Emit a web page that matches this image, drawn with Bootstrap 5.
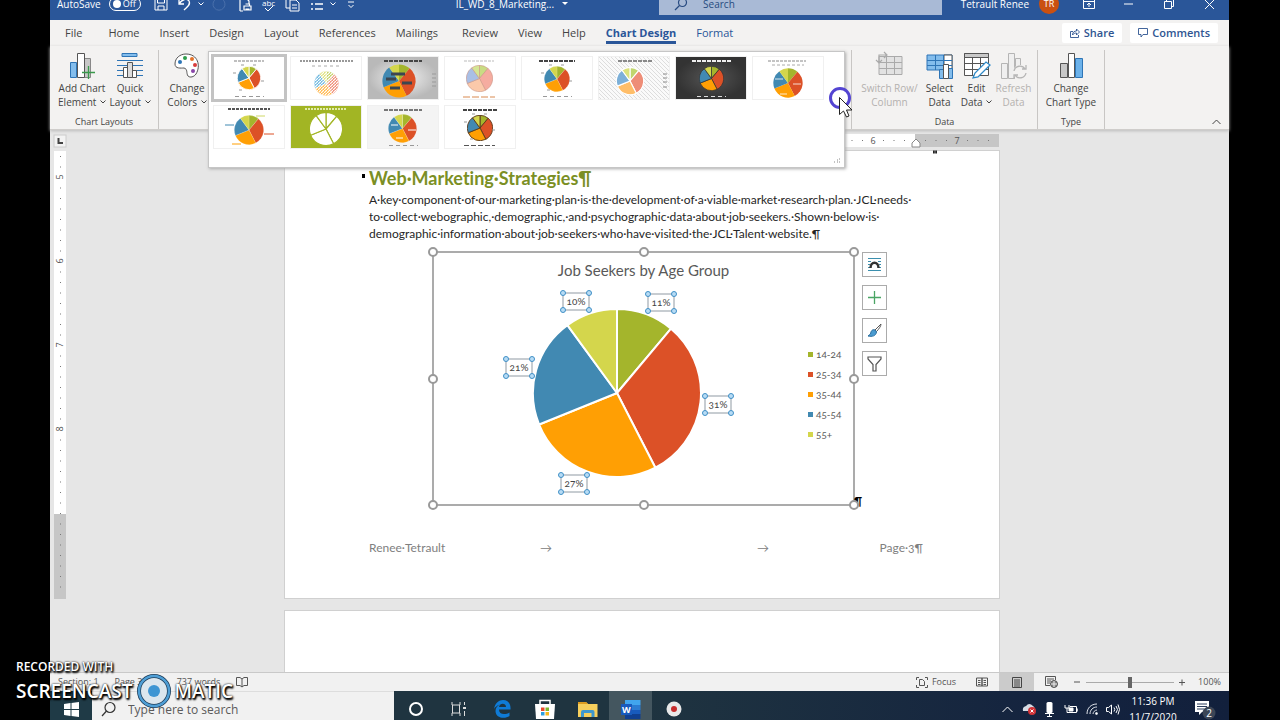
<!DOCTYPE html>
<html lang="en">
<head>
<meta charset="utf-8">
<meta name="viewport" content="width=device-width, initial-scale=1">
<title>IL_WD_8_Marketing - Word</title>
<link href="https://cdn.jsdelivr.net/npm/bootstrap@5.3.0/dist/css/bootstrap.min.css" rel="stylesheet">
<style>
:root{--word:#2a5699;--ink:#444;--line:#c8c6c4}
body{background:#000;font-family:"Open Sans","Noto Sans",sans-serif;font-size:11px;line-height:14px;color:var(--ink)}
svg{display:block;flex:none;overflow:visible}
button{background:none;border:0;padding:0;color:inherit;font:inherit}
.screen{height:100vh;padding:0 51px 0 50px}
.desk{background:#e6e6e6}
/* title bar */
.titlebar{height:20px;background:var(--word);color:#fff;font-size:10px}
.titlebar-in{height:32px;margin-top:-12px;padding-left:7px}
.tb{width:24px;height:24px;display:flex;align-items:center;justify-content:center}
.tb.slim{width:8px}.tb.wide{width:28px}.tb.win{width:40px}
.toggle{width:32px;height:14px;border:1px solid #fff;border-radius:7px;padding:0 4px 0 3px;font-size:9px;line-height:12px}
.knob{width:8px;height:8px;border-radius:50%;background:#fff}
.searchbox{width:283px;height:22px;background:#a9bad6;color:#274a80;padding-left:16px}
.searchbox input,.tasksearch input{background:none;border:0;outline:0;padding:0;min-width:0;flex:1}
.searchbox input::placeholder{color:#274a80;opacity:1}
.avatar{width:20px;height:20px;border-radius:50%;background:#ca5010;font-size:9px;line-height:20px;margin:0 10px}
/* tabs */
.tabs{height:26px;background:#f3f2f1;padding:0 11px 0 5px}
.tabs a{color:var(--ink);text-decoration:none;padding:5px 10px;line-height:16px}
.tabs a.file{margin-right:6px}
.tabs a.ctx{color:var(--word)}
.tabs a.on{font-weight:700}
.tabs a.on span{display:block;box-shadow:0 3px 0 var(--word)}
.pill{background:#fff;border-radius:2px;height:20px;color:#2f5591;font-weight:600}
/* ribbon */
.ribbon{height:84px;background:#f3f2f1;font-size:10px;border-bottom:1px solid #cfcdcb;box-shadow:0 1px 3px #bbb;position:relative;z-index:3}
.rgroup{border-right:1px solid var(--line);margin-top:4px;position:relative}
.rbtn{padding-top:2px;line-height:14px;text-align:center}
.rbtn svg{margin:0 auto 1px}
.rbtn .cv{display:inline-block;margin:0 0 2px 1px}
.rbtn:disabled{color:#b3b1af}
.rlabel{font-size:9px;line-height:14px;text-align:center}
.gallery{position:absolute;left:49px;right:6px;top:1px;height:117px;background:#fff;border:1px solid #c6c6c6;box-shadow:1px 1px 3px #aaa;padding:5px 4px 4px 5px;display:grid;grid-template-columns:repeat(auto-fill,70px);grid-auto-rows:42px;gap:7px}
.thumb{width:70px;height:42px;outline:1px solid #f0f0f0}
.thumb.on{outline:3px solid #c3c3c3}
/* workspace */
.vruler{width:21px;padding-left:4px}
.pagecol{width:714px}
.hruler{height:13px;margin-top:4px;margin-bottom:4px}
.page{background:#fff;outline:1px solid #d0d0d0}
.page1{padding:16px 76px 41px 84px;height:447px;flex:none}
.page1,.chart,.labels{font-family:Lato,"Open Sans",sans-serif;font-variant-ligatures:none}
.page1 h1{font-size:18px;line-height:22px;font-weight:700;color:#7b8f24;margin:0 0 2px}
.page1 h1::before{content:"";position:absolute;width:3px;height:4px;background:#000;margin:7px 0 0 -7px}
.page1 p{font-size:12px;line-height:17px;color:#262626;margin:0;white-space:nowrap}
.chart{width:421px;height:253px;outline:2px solid #ababab;outline-offset:-1px;position:relative;color:#595959;font-variant-numeric:oldstyle-nums}
.chart h2{font-size:15px;line-height:22px;font-weight:400;margin:0;padding:7px 0 8px;text-align:center}
.grip{position:absolute;width:10px;height:10px;border:2px solid #999;border-radius:50%;background:#fff;transform:translate(-50%,-50%)}
.legend{font-size:10px;line-height:20px;margin:55px 0 0 65px;padding:0;list-style:none}
.legend i{width:5px;height:5px;margin-right:3px}
.sidebtn{width:25px;height:25px;border:1px solid #ababab;background:#fff;display:flex;align-items:center;justify-content:center}
.footline{font-size:12px;line-height:16px;color:#808080;font-variant-numeric:oldstyle-nums;grid-template-columns:171px 217px 1fr}
/* status bar */
.status{height:19px;background:#f1f1f1;border-top:1px solid #c9c9c9;font-size:9px;color:#555}
.status .view{width:35px;height:18px;display:flex;align-items:center;justify-content:center}
.status .view.on{background:#cbcbcb}
.zoomer{-webkit-appearance:none;appearance:none;width:88px;height:12px;background:linear-gradient(#aaa,#aaa) center/100% 1px no-repeat;margin:0 4px 0 5px}
.zoomer::-webkit-slider-thumb{-webkit-appearance:none;width:4px;height:11px;background:#666}
.zoomer::-moz-range-thumb{width:4px;height:11px;background:#666;border:0;border-radius:0}
/* taskbar */
.taskbar{height:29px;background:linear-gradient(90deg,#1f3440 0 50%,#14233f 85%,#12203c);color:#fff}
.task{height:36px;width:43px;display:flex;align-items:center;justify-content:center}
.task.start{width:42px;background:#1f3a46}
.task.on{background:#44565f}
.tasksearch{width:302px;height:36px;background:#f1f1f1;border-top:1px solid #ddd;padding-left:9px;color:#555;font-size:12px}
.tasksearch input::placeholder{color:#5a5a5a;opacity:1}
.tray{width:21px;height:36px;display:flex;align-items:center;justify-content:center}
.clock{font-size:10px;line-height:16px;padding-top:2px;width:60px;height:36px;text-align:center}
/* recorder mark */
.mark-rec{position:absolute;left:16px;bottom:12px;color:#fff;font-weight:700;text-shadow:1px 1px 2px #000,0 0 2px #000,1px 2px 2px #000;z-index:5;pointer-events:none}
.mark-rec .sm-line{font-size:12px;line-height:14px;font-weight:600}
.mark-rec .lg-line{font-size:19px;line-height:32px;font-weight:600}
.pointer{position:absolute;right:-7px;top:34px}
</style>
</head>
<body>

<!-- shared drawings -->
<svg width="0" height="0" class="position-absolute" aria-hidden="true">
  <defs>
    <symbol id="pie" viewBox="-86 -86 172 172">
      <g stroke="var(--ps,#fff)" stroke-width="var(--pw,2)" stroke-linejoin="round">
        <path fill="var(--a,#a4b52c)" d="M0 0V-84A84 84 0 0 1 54-64.3Z"/>
        <path fill="var(--b,#dc5127)" d="M0 0L54-64.3A84 84 0 0 1 38.4 74.7Z"/>
        <path fill="var(--c,#ff9f04)" d="M0 0L38.4 74.7A84 84 0 0 1-77.9 31.5Z"/>
        <path fill="var(--d,#4189b2)" d="M0 0L-77.9 31.5A84 84 0 0 1-49.6-67.8Z"/>
        <path fill="var(--e,#d4d64c)" d="M0 0L-49.6-67.8A84 84 0 0 1 0-84Z"/>
      </g>
    </symbol>
    <symbol id="cv" viewBox="0 0 6 4"><path d="M.5.5 3 3 5.5.5" fill="none" stroke="currentColor"/></symbol>
    <pattern id="hatch" width="4" height="4" patternUnits="userSpaceOnUse"><rect width="4" height="4" fill="#fafafa"/><path d="M0 0 4 4" stroke="#d5d5d5" stroke-width=".8"/></pattern>
    <pattern id="pr" width="3" height="3" patternUnits="userSpaceOnUse"><path d="M0 3 3 0" stroke="#fff" stroke-width="1.2"/></pattern>
    <radialGradient id="grey"><stop stop-color="#f2f2f2"/><stop offset="1" stop-color="#b9b9b9"/></radialGradient>
    <radialGradient id="dark"><stop stop-color="#555"/><stop offset="1" stop-color="#333"/></radialGradient>
    <g id="dots" fill="none" stroke="#999" stroke-width="1"><path d="M19 16h3M47 24h3M25 33h3M27 8h3M39 8h3"/></g>
    <path id="leg" d="M21 39.5H50" fill="none" stroke="#999" stroke-dasharray="4 3"/>
  </defs>
</svg>

<div class="screen d-flex flex-column overflow-hidden position-relative">

  <!-- title bar -->
  <header class="titlebar overflow-hidden flex-shrink-0">
    <div class="titlebar-in d-flex align-items-center">
      <span>AutoSave</span>
      <button class="toggle d-flex align-items-center justify-content-between ms-2 me-2" aria-label="AutoSave off"><span class="knob"></span>Off</button>
      <button class="tb" aria-label="Save"><svg width="14" height="14" fill="none" stroke="#fff"><path d="M1 1h12v12H1ZM3.5 1v5h7V1M4 13V9h6v4"/></svg></button>
      <button class="tb" aria-label="Undo"><svg width="13" height="14" fill="none" stroke="#fff" stroke-width="1.3"><path d="M1 2v5h5M1 7C4 2 9 1 11 4c2 4-2 6-5 9"/></svg></button>
      <button class="tb slim" aria-label="Undo list"><svg width="6" height="4"><use href="#cv"/></svg></button>
      <button class="tb wide" aria-label="Redo" disabled><svg width="14" height="14" fill="none" stroke="#4a70ab"><path d="M10 2a6 6 0 1 1-6 0"/></svg></button>
      <button class="tb" aria-label="Print preview"><svg width="14" height="15" fill="none" stroke="#fff" stroke-width="1.2"><path d="M2 14V1h6l3 3v3M2 14h3"/><path d="M6 9h7v4H6ZM7.500 7h4v2M7.500 12h4"/></svg></button>
      <button class="tb" aria-label="Spelling"><svg width="14" height="14"><text x="0" y="9" font-size="8" fill="#fff">abc</text><path d="m3 11 3 3 5-5" fill="none" stroke="#fff"/></svg></button>
      <button class="tb" aria-label="Copy"><svg width="15" height="14" fill="none" stroke="#fff"><path d="M5 11H1V1h6v2M5 3h6l3 3v8H5ZM7 8h5M7 11h5"/></svg></button>
      <button class="tb" aria-label="Bullets"><svg width="14" height="14" stroke="#fff" stroke-width="1.5"><path d="M1 2h2M5 2h8M1 7h2M5 7h8M1 12h2M5 12h8"/></svg></button>
      <button class="tb slim" aria-label="Bullet list"><svg width="6" height="4"><use href="#cv"/></svg></button>
      <button class="tb wide" aria-label="Customize toolbar"><svg width="8" height="8" fill="none" stroke="#fff"><path d="M1 2h6M1.500 5 4 7.500 6.500 5"/></svg></button>
      <div class="flex-grow-1 d-flex align-items-center justify-content-center">IL_WD_8_Marketing...<svg class="ms-2" width="6" height="4"><path d="M0 0h6L3 3Z" fill="#fff"/></svg></div>
      <label class="searchbox d-flex align-items-center">
        <svg width="12" height="12" class="me-3" fill="none" stroke="currentColor" stroke-width="1.200"><circle cx="7.500" cy="4.500" r="4"/><path d="M4.500 7.500 0 12"/></svg>
        <input type="search" placeholder="Search" aria-label="Search">
      </label>
      <span class="ms-auto ps-3">&nbsp;Tetrault Renee</span>
      <span class="avatar text-center">TR</span>
      <button class="tb win" aria-label="Ribbon options"><svg width="12" height="10" fill="none" stroke="#fff"><path d="M.5.5h11v9H.5ZM.5 2.500h11M6 8V4.500M4 6l2-2 2 2"/></svg></button>
      <button class="tb win" aria-label="Minimize"><svg width="10" height="2"><path d="M0 1h9" stroke="#fff"/></svg></button>
      <button class="tb win" aria-label="Restore"><svg width="10" height="10" fill="none" stroke="#fff"><path d="M.5 2.500h7v7h-7ZM2.500 2.500v-2h7v7h-2"/></svg></button>
      <button class="tb win" aria-label="Close"><svg width="9" height="9" stroke="#fff"><path d="m0 0 9 9M9 0 0 9"/></svg></button>
    </div>
  </header>

  <!-- ribbon tabs -->
  <nav class="tabs d-flex align-items-center flex-shrink-0" aria-label="Ribbon tabs">
    <a class="file" href="#">File</a><a href="#">Home</a><a href="#">Insert</a><a href="#">Design</a><a href="#">Layout</a><a href="#">References</a><a class="me-1" href="#">Mailings</a><a href="#">Review</a><a href="#">View</a><a href="#">Help</a><a class="ctx on" href="#" aria-current="page"><span>Chart Design</span></a><a class="ctx" href="#">Format</a>
    <button class="pill ms-auto d-flex align-items-center px-2"><svg class="me-1" width="10" height="10" fill="none" stroke="currentColor" stroke-width=".9"><path d="M3 3.500H.5v6h8V7M2.500 7c0-3 2-4 4-4V1l3 3-3 3V5c-2 0-3 .5-4 2Z"/></svg>Share</button>
    <button class="pill ms-2 d-flex align-items-center px-2"><svg class="me-1" width="10" height="10" fill="none" stroke="currentColor" stroke-width=".9"><path d="M.5.5h9v6H5L3 9V6.500H.5Z"/></svg>Comments</button>
  </nav>

  <!-- ribbon -->
  <section class="ribbon d-flex flex-shrink-0" aria-label="Chart Design">
    <div class="rgroup d-flex flex-column" style="width:109px">
      <div class="d-flex justify-content-center align-items-start flex-grow-1">
        <button class="rbtn" style="width:52px"><svg width="28" height="28" fill="none" stroke="#555"><path d="M2.500 10.500h6v15h-6Z" fill="#83bdec" stroke="#2e75b6"/><path d="M16.500 6.500h6v19h-6Z" fill="#c8c8c8" stroke="#888"/><path d="M9.500 1.500h7v24h-7Z" fill="#fff"/><path d="M20.500 14v13M14 20.500h13" stroke="#3a9a4c" stroke-width="1.300"/></svg>Add Chart<br>Element <svg class="cv" width="6" height="4"><use href="#cv"/></svg></button>
        <button class="rbtn" style="width:44px"><svg width="28" height="28" fill="none" stroke="#555"><path d="M6 1.500h15v3H6Z" fill="#83bdec" stroke="#2e75b6"/><path d="M1 8.500h26M1 13.500h26M1 18.500h26M1 23.500h26" stroke="#2e75b6"/><path d="M7.500 15.500h4v10h-4ZM16.500 18.500h4v7h-4Z" fill="#fff"/><path d="M11.500 10.500h5v15h-5Z" fill="#ddd"/></svg>Quick<br>Layout <svg class="cv" width="6" height="4"><use href="#cv"/></svg></button>
      </div>
      <div class="rlabel">Chart Layouts</div>
    </div>
    <div class="rgroup flex-grow-1">
      <button class="rbtn ms-1" style="width:48px"><svg width="28" height="28"><path d="M13 2C7 2 2 6 2 12c0 5 6 4 9 4 4 1 2 5 4 8 2 2 6 1 8-2 5-8 2-20-10-20Z" fill="#fff" stroke="#555"/><circle cx="7" cy="10" r="2" fill="#2e75b6"/><circle cx="12" cy="6" r="2" fill="#2f9e4c"/><circle cx="19" cy="7" r="2" fill="#e3732a"/><circle cx="22" cy="13" r="2" fill="#d93c3c"/><circle cx="20" cy="19" r="2" fill="#8a45a8"/></svg>Change<br>Colors <svg class="cv" width="6" height="4"><use href="#cv"/></svg></button>

      <!-- open style gallery -->
      <div class="gallery" role="listbox" aria-label="Chart styles">
        <button class="thumb on" aria-label="Style 1"><svg width="70" height="42"><path d="M20 4h30" stroke="#aaa" stroke-width="1.500" stroke-dasharray="3 1"/><use href="#pie" x="23" y="9" width="24" height="24" style="--pw:6"/><use href="#dots"/><use href="#leg"/></svg></button>
        <button class="thumb" aria-label="Style 2"><svg width="70" height="42"><path d="M9 4h53" stroke="#999" stroke-width="2" stroke-dasharray="2 1"/><path d="M21 9h30" stroke="#aaa" stroke-dasharray="3 3"/><use href="#pie" x="23" y="14" width="25" height="25" style="--a:#c4d368;--b:#ef8e78;--c:#ffb950;--d:#70b9e0;--e:#dfe27c"/><circle cx="35.500" cy="26.500" r="12" fill="url(#pr)"/></svg></button>
        <button class="thumb" aria-label="Style 3"><svg width="70" height="42"><rect width="70" height="42" fill="url(#grey)"/><path d="M16 4h38" stroke="#444" stroke-width="2" stroke-dasharray="4 1"/><use href="#pie" x="14" y="7" width="34" height="34" style="--pw:0"/><path d="M23 17h14M18 22h10M34 26h10M22 31h10" stroke="#3c4650" stroke-width="3"/><path d="M64 17h4M64 21h4M64 25h4M64 29h4" stroke="#999"/></svg></button>
        <button class="thumb" aria-label="Style 4"><svg width="70" height="42"><path d="M19 4h30" stroke="#bbb" stroke-dasharray="3 1"/><use href="#pie" x="21" y="8" width="27" height="27" style="--a:#c9dc83;--b:#f5aca0;--c:#fbc9aa;--d:#a9bfe6;--e:#d5e694;--ps:#c98;--pw:4"/><path d="M18 40h32" stroke="#d98a50" stroke-dasharray="7 2"/></svg></button>
        <button class="thumb" aria-label="Style 5"><svg width="70" height="42"><path d="M17 4h36" stroke="#444" stroke-width="2" stroke-dasharray="4 1"/><use href="#pie" x="22" y="9" width="26" height="26" style="--pw:1"/><use href="#dots"/><use href="#leg"/></svg></button>
        <button class="thumb" aria-label="Style 6"><svg width="70" height="42"><rect width="70" height="42" fill="url(#hatch)"/><path d="M19 4h34" stroke="#888" stroke-width="2" stroke-dasharray="4 1"/><use href="#pie" x="17" y="10" width="28" height="28" style="--a:#c0d66e;--b:#ee8d77;--c:#ffbe69;--d:#7db0d8;--e:#dbe27c;--pw:7"/><path d="M64 17h4M64 21h4M64 25h4M64 30h4" stroke="#888"/></svg></button>
        <button class="thumb" aria-label="Style 7"><svg width="70" height="42"><rect width="70" height="42" fill="url(#dark)"/><path d="M16 4h39" stroke="#eee" stroke-width="2" stroke-dasharray="4 1"/><use href="#pie" x="23" y="9" width="25" height="25" style="--ps:#333;--pw:5"/><path d="M21 39.500H50" stroke="#ddd" stroke-dasharray="4 3"/></svg></button>
        <button class="thumb" aria-label="Style 8"><svg width="70" height="42"><path d="M15 4h38" stroke="#888" stroke-width="1" stroke-dasharray="3 1"/><path d="M19 8h32" stroke="#aaa" stroke-dasharray="3 2"/><use href="#pie" x="20" y="11" width="30" height="30" style="--pw:0"/><path d="M22 22h8M40 27h8M27 37h7" stroke="#fff" opacity=".8"/></svg></button>
        <button class="thumb" aria-label="Style 9"><svg width="70" height="42"><path d="M14 3h42" stroke="#555" stroke-width="2" stroke-dasharray="3 1"/><use href="#pie" x="20" y="9" width="30" height="30" style="--pw:1"/><path d="M11 19h9" stroke="#4189b2"/><path d="M50 28h10" stroke="#dc5127"/><path d="M18 38h9" stroke="#ff9f04"/><path d="M42 10h9" stroke="#cfd866"/></svg></button>
        <button class="thumb" aria-label="Style 10"><svg width="70" height="42"><rect width="70" height="42" fill="#a2b524"/><path d="M14 3h42" stroke="#e2ecab" stroke-width="2" stroke-dasharray="2 1"/><use href="#pie" x="18" y="6" width="34" height="34" style="--a:#fff;--b:#fff;--c:#fff;--d:#fff;--e:#fff;--ps:#a2b524;--pw:6"/></svg></button>
        <button class="thumb" aria-label="Style 11"><svg width="70" height="42"><rect width="70" height="42" fill="#f4f4f4"/><path d="M16 4h38" stroke="#777" stroke-width="2" stroke-dasharray="4 1"/><use href="#pie" x="20" y="8" width="29" height="29" style="--pw:1"/><path d="M23 19h7M40 24h8M28 32h7" stroke="#fff"/><use href="#leg"/></svg></button>
        <button class="thumb" aria-label="Style 12"><svg width="70" height="42"><path d="M18 4h34" stroke="#444" stroke-width="2" stroke-dasharray="4 1"/><use href="#pie" x="22" y="9" width="26" height="26" style="--ps:#5a3b1c;--pw:6"/><use href="#dots"/><path d="M19 39.500h31" stroke="#555" stroke-dasharray="5 2"/></svg></button>
        <svg class="position-absolute bottom-0 end-0 m-1" width="6" height="6"><path d="M0 5h1M3 5h1M5 5h1M3 3h1M5 2h1" stroke="#888"/></svg>
        <svg class="pointer" width="22" height="32"><circle cx="11" cy="12" r="9.500" fill="#fff" stroke="#5344d2" stroke-width="3"/><path d="M10.500 11.500v17l4-3.500 3 6 2.500-1-2.500-6h5.500Z" fill="#fff" stroke="#222"/></svg>
      </div>
    </div>
    <div class="rgroup d-flex flex-column" style="width:186px">
      <div class="d-flex justify-content-center align-items-start flex-grow-1 ps-1">
        <button class="rbtn" style="width:60px" disabled><svg width="28" height="28" fill="none" stroke="#aaa"><path d="M3 4.500h23v18H3Z" fill="#e2e2e2"/><path d="M3 10.500h23M3 16.500h23M10.500 4v18M18.500 4v18"/><path d="M3 11V3h8M8 0l3 3-3 3M0 8l3 3 3-3" stroke-width="1.200"/></svg>Switch Row/<br>Column</button>
        <button class="rbtn" style="width:40px"><svg width="28" height="28" fill="none" stroke="#2e75b6"><path d="M1 3h25v15H1Z" fill="#83bdec"/><path d="M18 3h8v15h-8Z" fill="#fff" stroke="#555"/><path d="M1 8.500h25M1 13.500h25M9.500 3v15M17.500 3v15"/><path d="M13.500 17.500h4v9h-4ZM22.500 16.500h4v10h-4Z" fill="#83bdec"/><path d="M17.500 12.500h5v14h-5Z" fill="#fff" stroke="#555"/></svg>Select<br>Data</button>
        <button class="rbtn" style="width:34px"><svg width="28" height="28" fill="none" stroke="#555"><path d="M1.500 1.500h24v22h-24Z" fill="#fff"/><path d="M1.500 1.500h24v4h-24Z" fill="#c9c9c9"/><path d="M1.500 11.500h24M1.500 17.500h24M9.500 6v17M17.500 6v17"/><path d="m10 26 2-5L23 10l4 3-12 12Z" fill="#fff" stroke="#2e8ac8" stroke-width="1.300"/></svg>Edit<br>Data <svg class="cv" width="6" height="4"><use href="#cv"/></svg></button>
        <button class="rbtn" style="width:40px" disabled><svg width="28" height="28" fill="#efefef" stroke="#b5b5b5"><path d="M1.500 11.500h6v15h-6ZM15.500 6.500h5v10h-5ZM8.500 1.500h6v25h-6Z"/><circle cx="20" cy="20" r="7" stroke="none" fill="#f3f2f1"/><path d="M14 19a6 6 0 0 1 11-2M26 21a6 6 0 0 1-11 2M26 13v4h-4M14 27v-4h4" fill="none" stroke-width="1.300"/></svg>Refresh<br>Data</button>
      </div>
      <div class="rlabel">Data</div>
    </div>
    <div class="rgroup d-flex flex-column" style="width:67px">
      <div class="d-flex justify-content-center align-items-start flex-grow-1">
        <button class="rbtn"><svg width="28" height="28" fill="none" stroke="#555"><path d="M3.500 11.500h7v14h-7Z" fill="#c8c8c8"/><path d="M18.500 6.500h7v19h-7Z" fill="#6cb2ea" stroke="#2e75b6"/><path d="M11.500 1.500h6v24h-6Z" fill="#fff"/></svg>Change<br>Chart Type</button>
      </div>
      <div class="rlabel">Type</div>
    </div>
    <div class="d-flex align-items-end justify-content-end" style="width:124px">
      <button class="px-2 pb-1" aria-label="Collapse the ribbon"><svg width="9" height="6" fill="none" stroke="#444"><path d="m.5 5 4-4 4 4"/></svg></button>
    </div>
  </section>

  <!-- document area -->
  <main class="desk d-flex flex-grow-1 overflow-hidden" style="min-height:0">
    <div class="vruler flex-shrink-0">
      <svg width="12" height="470" font-size="9" fill="#555" text-anchor="middle">
        <rect y="5" width="12" height="12" fill="#f3f3f3" stroke="#ccc"/><path d="M4.500 8v5H9" fill="none" stroke="#444" stroke-width="2"/>
        <rect y="21" width="12" height="363" fill="#fff"/><rect y="384" width="12" height="85" fill="#c6c6c6"/>
        <path d="M6.500 26V464" stroke="#777" stroke-dasharray="1 9.500"/>
        <g fill="#fff"><path d="M0 41h12v12H0ZM0 125h12v12H0ZM0 209h12v12H0ZM0 293h12v12H0Z"/></g>
        <text transform="translate(9 47) rotate(-90)">5</text><text transform="translate(9 131) rotate(-90)">6</text><text transform="translate(9 215) rotate(-90)">7</text><text transform="translate(9 299) rotate(-90)">8</text>
      </svg>
    </div>
    <div class="flex-grow-1 d-flex flex-column align-items-center pe-3">
      <div class="pagecol hruler flex-shrink-0">
        <svg width="714" height="13" font-size="9" fill="#555" text-anchor="middle">
          <rect width="714" height="13" fill="#c6c6c6"/><rect x="84" width="546" height="13" fill="#fff"/>
          <path d="M10 6.500H710" stroke="#777" stroke-dasharray="1 9.500"/>
          <rect x="582" y="1" width="12" height="11" fill="#fff"/><rect x="666" y="1" width="12" height="11" fill="#c6c6c6"/>
          <text x="588" y="10">6</text><text x="672" y="10">7</text>
          <path d="M627 13V9l4-4 4 4v4Z" fill="#fff" stroke="#888"/>
        </svg>
      </div>
      <article class="page page1 pagecol position-relative">
        <svg class="position-absolute top-0 end-0 me-5" width="19" height="3"><path d="M1 1h4" stroke="#222" stroke-width="3" stroke-dasharray="1.800 .4"/></svg>
        <h1>Web·Marketing·Strategies¶</h1>
        <p>A·key·component·of·our·marketing·plan·is·the·development·of·a·viable·market·research·plan.·JCL·needs·<br>to·collect·webographic,·demographic,·and·psychographic·data·about·job·seekers.·Shown·below·is·<br>demographic·information·about·job·seekers·who·have·visited·the·JCL·Talent·website.¶</p>

        <div class="d-flex" style="padding:10px 0 0 64px">
          <figure class="chart m-0 flex-shrink-0">
            <h2>Job Seekers by Age Group</h2>
            <div class="d-flex" style="padding-left:60px">
              <svg id="agePie" width="250" height="212" viewBox="493 289 250 212" class="labels" font-size="10" fill="#444" text-anchor="middle">
                <use href="#pie" x="531" y="307" width="172" height="172"/>
              </svg>
              <ul class="legend">
                <li class="d-flex align-items-center"><i style="background:#a4b52c"></i>14-24</li>
                <li class="d-flex align-items-center"><i style="background:#dc5127"></i>25-34</li>
                <li class="d-flex align-items-center"><i style="background:#ff9f04"></i>35-44</li>
                <li class="d-flex align-items-center"><i style="background:#4189b2"></i>45-54</li>
                <li class="d-flex align-items-center"><i style="background:#d4d64c"></i>55+</li>
              </ul>
            </div>
            <span class="grip top-0 start-0"></span><span class="grip top-0 start-50"></span><span class="grip top-0 start-100"></span>
            <span class="grip top-50 start-0"></span><span class="grip top-50 start-100"></span>
            <span class="position-absolute bottom-0 start-100 fw-bold text-black" style="line-height:8px">¶</span>
            <span class="grip top-100 start-0"></span><span class="grip top-100 start-50"></span><span class="grip top-100 start-100"></span>
          </figure>
          <div class="d-flex flex-column gap-2 ps-2 ms-px">
            <button class="sidebtn" aria-label="Layout options"><svg width="15" height="15" fill="none" stroke="#3b8fae"><path d="M1 1.500h13M1 13.500h13M1 4.500h3M11 4.500h3M1 7.500h2M12 7.500h2M1 10.500h2M12 10.500h2"/><path d="M3.500 11c0-7 8-7 8 0" stroke="#333" stroke-width="2.500"/></svg></button>
            <button class="sidebtn" aria-label="Chart elements"><svg width="15" height="15" stroke="#4aa564" stroke-width="1.300"><path d="M7.500 1v13M1 7.500h13"/></svg></button>
            <button class="sidebtn" aria-label="Chart styles"><svg width="15" height="15"><path d="M14 1 8 7l1.500 1.500C12 6 14 3 14 1Z" fill="#fff" stroke="#555"/><path d="M8 7c-3-1-4 1-4.500 4L1 13c4 1 8 0 8.500-4Z" fill="#4a9bd0" stroke="#2b6f9f"/></svg></button>
            <button class="sidebtn" aria-label="Chart filters"><svg width="15" height="16" fill="none" stroke="#555" stroke-width="1.200"><path d="M1 1h13v2L9 8.500V15H6V8.500L1 3Z"/></svg></button>
          </div>
        </div>

        <div class="footline d-grid pt-3" style="margin-top:19px">
          <span>Renee·Tetrault</span><span>→</span><span class="d-flex justify-content-between"><span>→</span><span>Page·3¶</span></span>
        </div>
      </article>
      <div class="page pagecol flex-grow-1" style="margin-top:13px"></div>
    </div>
  </main>

  <!-- status bar -->
  <footer class="status d-flex align-items-center flex-shrink-0 ps-2">
    <span class="me-3">Section: 1</span><span class="me-3">Page 3 of 6</span><span class="me-3">737 words</span>
    <svg width="12" height="11" fill="none" stroke="#555"><path d="M6 2 4 .5H.5v8H4L6 10l2-1.500h3.500v-8H8L6 2v8"/></svg>
    <button class="ms-auto me-2 d-flex align-items-center"><svg class="me-1" width="12" height="11" fill="none" stroke="#555"><path d="M.5 3V.5H3M9 .5h2.500V3M.5 8v2.500H3M9 10.500h2.500V8M3.500 2.500h3l2 2v4h-5Z"/></svg>Focus</button>
    <button class="view" aria-label="Read mode"><svg width="12" height="10" fill="none" stroke="#555"><path d="M6 1H.5v8H6ZM6 1h5.500v8H6ZM2 3.500h2.500M2 5.500h2.500M7.500 3.500H10M7.500 5.500H10M2 7.500h2.500M7.500 7.500H10"/></svg></button>
    <button class="view on" aria-label="Print layout"><svg width="10" height="11" fill="none" stroke="#444"><path d="M.5.5h9v10h-9ZM2 3h6M2 5h6M2 7h6M2 9h6"/></svg></button>
    <button class="view" aria-label="Web layout"><svg width="13" height="12" fill="none" stroke="#555"><path d="M5 9.500H.5v-9h10V4M2 3h7M2 5h4M2 7h3"/><circle cx="9" cy="8" r="3.500" fill="#888"/><path d="M6 8h6M9 5v6" stroke="#eee"/></svg></button>
    <svg class="ms-1" width="8" height="8"><path d="M1 4h6" stroke="#555"/></svg>
    <input class="zoomer" type="range" min="10" max="190" value="100" aria-label="Zoom">
    <svg width="8" height="8"><path d="M1 4.500h6M4 1.500v6" stroke="#555"/></svg>
    <span class="px-2 ms-1">100%</span>
  </footer>

  <!-- Windows taskbar -->
  <nav class="taskbar d-flex overflow-hidden flex-shrink-0" aria-label="Taskbar">
    <button class="task start" aria-label="Start"><svg width="15" height="15" fill="#fff"><path d="M0 2l6.500-1v6H0ZM7.500.9 15 0v7H7.500ZM0 8h6.500v6L0 13ZM7.500 8H15v7l-7.500-1Z"/></svg></button>
    <label class="tasksearch d-flex align-items-center"><svg class="me-2" width="15" height="15" fill="none" stroke="#333" stroke-width="1.200"><circle cx="9" cy="5.500" r="5"/><path d="M5.500 9 1 14"/></svg><input class="ms-1" type="search" placeholder="Type here to search" aria-label="Type here to search"></label>
    <button class="task" aria-label="Cortana"><svg width="14" height="14" fill="none" stroke="#fff" stroke-width="2"><circle cx="7" cy="7" r="6"/></svg></button>
    <button class="task" aria-label="Task view"><svg width="15" height="14" fill="none" stroke="#ddd"><path d="M1 0v3h8V0M1 14v-3h8v3M1.500 3v8M8.500 3v8M13.500 0v3M13.500 9v5"/><path d="M12 6h3" stroke-width="2"/></svg></button>
    <button class="task" aria-label="Edge"><svg width="18" height="18"><path d="M1 9C2 3 6 0 10 0c5 0 8 4 7.500 9.500H6c0 3 2 4.500 5 4.500 2 0 4-.5 5.500-1.500V16c-5 3.500-14 2-14-5 0-3 2-5.500 4.500-6.500C4 5.500 2 7 1 9Zm5-2h7c0-4-6-4.500-7 0Z" fill="#0f7bd6"/></svg></button>
    <button class="task" aria-label="Store"><svg width="20" height="20"><path d="M5 6V1.500h10V6" fill="none" stroke="#fff" stroke-width="1.500"/><path d="M0 5h20l-1 15H1Z" fill="#fff"/><path d="M6 8.500h3.500V12H6Z" fill="#e8482b"/><path d="M10.500 8.500H14V12h-3.500Z" fill="#7db72f"/><path d="M6 13h3.500v3.500H6Z" fill="#2d9fe0"/><path d="M10.500 13H14v3.500h-3.500Z" fill="#f7b71d"/></svg></button>
    <button class="task" aria-label="File Explorer"><svg width="20" height="17"><path d="M0 1h8l2 2h9.500v13H0Z" fill="#f7cf5c"/><path d="M0 1h8l2 2H0Z" fill="#dd9c1f"/><path d="M3 16v-5q0-2 2-2h9.500q2 0 2 2v5h-3v-4H6v4Z" fill="#3d97cf"/></svg></button>
    <button class="task on" aria-label="Word"><svg width="20" height="19"><path d="M4 0h15.500v5H4Z" fill="#41a5ee"/><path d="M4 5h15.500v5H4Z" fill="#2b7cd3"/><path d="M4 10h15.500v4H4Z" fill="#185abd"/><path d="M4 14h15.500v5H4Z" fill="#103f91"/><rect y="4" width="11" height="11" fill="#185abd"/><text x="1" y="13" font-size="9" font-weight="700" fill="#fff">W</text></svg></button>
    <button class="task" aria-label="Recorder"><svg width="16" height="16"><circle cx="8" cy="8" r="7.500" fill="#e8e8e8"/><circle cx="8" cy="8" r="3" fill="#c62b2b"/></svg></button>
    <div class="ms-auto d-flex">
      <button class="tray" aria-label="Hidden icons"><svg width="11" height="7" fill="none" stroke="#fff"><path d="m.5 6 5-5 5 5"/></svg></button>
      <span class="tray"><svg width="14" height="12"><path d="M1 8q-1-4 3-5 3-4 7 0 2 1 2 5Z" fill="#d7dce4"/><circle cx="10" cy="8" r="4" fill="#d13438"/><path d="m8.500 6.500 3 3m0-3-3 3" stroke="#fff"/></svg></span>
      <span class="tray"><svg width="9" height="15"><rect x="1.500" width="6" height="11" rx="1.500" fill="#fff"/><path d="M0 11.500h9M4.500 11v4M2 14.500h5" stroke="#fff"/></svg></span>
      <span class="tray"><svg width="14" height="10" fill="none" stroke="#fff"><path d="M1 1v3h4V1M3 4v4.500h9.500v-6H6"/><path d="M13 4.500v3" stroke-width="1.500"/><path d="M5 4h4v3H5Z" fill="#fff"/></svg></span>
      <span class="tray"><svg width="12" height="12" fill="none" stroke="#dfe3ea"><path d="M1 11C1 5 5 1 11 1M4 11c0-4 3-7 7-7M7 11c0-2 2-4 4-4"/><circle cx="10.500" cy="10.500" r="1" fill="#fff"/></svg></span>
      <span class="tray"><svg width="13" height="11" fill="none" stroke="#fff"><path d="M.5 3.500h2L5.500 1v9l-3-2.500h-2ZM8 3.500q1.500 2 0 4M10 2q3 3.500 0 7M12 .5q3 5 0 10"/></svg></span>
      <div class="clock">11:36 PM<br>11/7/2020</div>
      <button class="tray" style="width:46px" aria-label="Notifications, 2 new"><svg width="22" height="20"><path d="M0 2h14v11H7l-3 3v-3H0Z" fill="#fff"/><path d="M2 5h10M2 7.500h10M2 10h7" stroke="#2a3c5c"/><circle cx="14" cy="14" r="6.500" fill="#3c4656"/><text x="14" y="18" font-size="10" fill="#fff" text-anchor="middle">2</text></svg></button>
    </div>
  </nav>

  <!-- recorder mark -->
  <div class="mark-rec">
    <div class="sm-line">RECORDED WITH</div>
    <div class="lg-line d-flex align-items-center">SCREENCAST<svg class="ms-1 me-1" width="34" height="34"><circle cx="17" cy="17" r="15" fill="#dbe6ee" stroke="#1d3c58" stroke-width="4"/><circle cx="17" cy="17" r="15" fill="none" stroke="#4f9fd6" stroke-width="2.500"/><circle cx="17" cy="17" r="6" fill="#3d95d3"/></svg>MATIC</div>
  </div>
</div>

<script src="https://cdn.jsdelivr.net/npm/bootstrap@5.3.0/dist/js/bootstrap.bundle.min.js"></script>
<script>
// data labels of the pie, each with its selection handles
const labels = [['11%', 661, 302], ['31%', 718, 404], ['27%', 574, 483], ['21%', 519, 367], ['10%', 576, 301]];
document.getElementById('agePie').insertAdjacentHTML('beforeend', labels.map(([t, x, y]) =>
  `<rect x="${x - 13}" y="${y - 8}" width="26" height="17" fill="#fff" fill-opacity=".9" stroke="#8f9aa3"/>` +
  [[-13, -8], [13, -8], [-13, 9], [13, 9]].map(([a, b]) => `<circle cx="${x + a}" cy="${y + b}" r="2.5" fill="#b8dcf5" stroke="#3f8fc6"/>`).join('') +
  `<text x="${x}" y="${y + 4}">${t}</text>`).join(''));
</script>
</body>
</html>
